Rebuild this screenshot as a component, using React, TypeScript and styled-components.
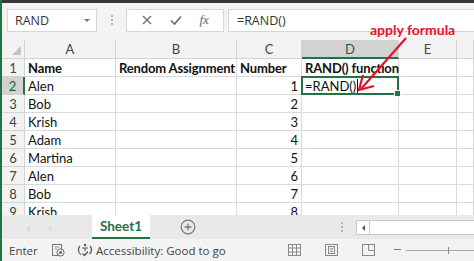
import React, { FC } from "react";
import styled, { createGlobalStyle } from "styled-components";

const GlobalStyle = createGlobalStyle`
    html, body {
        margin: 0;
        padding: 0;
        width: 474px;
        height: 261px;
        overflow: hidden;
        background: #ffffff;
    }
    * {
        box-sizing: border-box;
    }
`;

const GREEN = "#217346";
const COLS = "23px 91px 121px 65px 97px 58px 1fr";

const Window = styled.div`
    position: relative;
    width: 474px;
    height: 261px;
    display: flex;
    flex-direction: column;
    border-left: 2px solid ${GREEN};
    background: #f3f3f3;
    font-family: Lato, "Open Sans", sans-serif;
    overflow: hidden;
`;

const TitleEdge = styled.div`
    height: 3px;
    background: #383838;
`;

const FormulaBar = styled.div`
    height: 37px;
    display: flex;
    align-items: center;
    padding: 0 0 3px 5px;
    background: #f3f3f3;
`;

const NameBox = styled.div`
    width: 90px;
    height: 23px;
    background: #fff;
    border: 1px solid #d6d6d6;
    display: flex;
    align-items: center;
    justify-content: space-between;
    padding: 0 6px 0 7px;
    font-family: "Open Sans", sans-serif;
    font-size: 12.5px;
    color: #333;
`;

const Caret = styled.span`
    width: 0;
    height: 0;
    border-left: 3px solid transparent;
    border-right: 3px solid transparent;
    border-top: 3px solid #777;
`;

const Grip = styled.div`
    width: 29px;
    display: flex;
    flex-direction: column;
    align-items: center;
    gap: 2px;
`;

const Dot = styled.span`
    width: 2px;
    height: 2px;
    background: #b4b4b4;
`;

const ButtonBox = styled.div`
    width: 98px;
    height: 23px;
    background: #fff;
    border: 1px solid #d6d6d6;
    display: flex;
    align-items: center;
    justify-content: space-around;
    padding: 0 6px;
`;

const Fx = styled.span`
    font-family: "Liberation Serif", serif;
    font-style: italic;
    font-size: 13px;
    color: #666;
`;

const FormulaInput = styled.div`
    flex: 1;
    height: 23px;
    margin-left: 4px;
    background: #fff;
    border: 1px solid #d6d6d6;
    border-right: none;
    display: flex;
    align-items: center;
    padding-left: 8px;
    font-family: "Open Sans", sans-serif;
    font-size: 12.5px;
    color: #333;
`;

const Sheet = styled.div`
    height: 175px;
    overflow: hidden;
    background: #fff;
`;

const Row = styled.div<{ $header?: boolean }>`
    display: grid;
    grid-template-columns: ${COLS};
    height: ${(p) => (p.$header ? "19px" : "18px")};
`;

const ColHead = styled.div<{ $active?: boolean }>`
    display: flex;
    align-items: center;
    justify-content: center;
    background: ${(p) => (p.$active ? "#d2d2d2" : "#f3f3f3")};
    border-right: 1px solid #d4d4d4;
    border-bottom: ${(p) => (p.$active ? `2px solid ${GREEN}` : "1px solid #d4d4d4")};
    color: ${(p) => (p.$active ? "#1f5d3b" : "#444")};
    font-size: 13px;
`;

const Corner = styled.div`
    position: relative;
    background: #f3f3f3;
    border-right: 1px solid #d4d4d4;
    border-bottom: 1px solid #d4d4d4;
    &::after {
        content: "";
        position: absolute;
        right: 3px;
        bottom: 3px;
        width: 0;
        height: 0;
        border-left: 9px solid transparent;
        border-bottom: 9px solid #c3c3c3;
    }
`;

const RowHead = styled.div<{ $active?: boolean }>`
    display: flex;
    align-items: center;
    justify-content: center;
    background: ${(p) => (p.$active ? "#d2d2d2" : "#f3f3f3")};
    border-right: ${(p) => (p.$active ? `2px solid ${GREEN}` : "1px solid #d4d4d4")};
    border-bottom: 1px solid #d4d4d4;
    color: ${(p) => (p.$active ? "#1f5d3b" : "#444")};
    font-size: 13px;
`;

const Cell = styled.div<{ $bold?: boolean; $right?: boolean }>`
    position: relative;
    display: flex;
    align-items: center;
    justify-content: ${(p) => (p.$right ? "flex-end" : "flex-start")};
    padding: 0 3px;
    border-right: 1px solid #dadada;
    border-bottom: 1px solid #dadada;
    font-size: 13px;
    font-weight: ${(p) => (p.$bold ? 700 : 400)};
    letter-spacing: ${(p) => (p.$bold ? "-0.15px" : "0")};
    color: #111;
    white-space: nowrap;
`;

const Selected = styled.div`
    position: absolute;
    left: -1px;
    top: -1px;
    right: -1px;
    bottom: -1px;
    border: 2px solid ${GREEN};
    z-index: 2;
    &::after {
        content: "";
        position: absolute;
        right: -4px;
        bottom: -4px;
        width: 5px;
        height: 5px;
        background: ${GREEN};
        border: 1px solid #fff;
    }
`;

const Caret2 = styled.span`
    display: inline-block;
    width: 1px;
    height: 14px;
    margin-left: 1px;
    background: #111;
`;

const TabBar = styled.div`
    height: 24px;
    display: flex;
    align-items: stretch;
    background: #e9e9e9;
`;

const NavArrows = styled.div`
    width: 90px;
    display: flex;
    align-items: center;
    padding-left: 25px;
    gap: 18px;
    color: #c4c4c4;
    font-size: 12px;
`;

const Tab = styled.div`
    width: 58px;
    background: #fff;
    border-bottom: 2px solid ${GREEN};
    display: flex;
    align-items: center;
    justify-content: center;
    color: ${GREEN};
    font-weight: 700;
    font-size: 13.5px;
`;

const AddSheet = styled.div`
    width: 76px;
    display: flex;
    align-items: center;
    justify-content: center;
`;

const TabSpacer = styled.div`
    flex: 1;
    display: flex;
    align-items: center;
    justify-content: flex-end;
    padding-right: 13px;
`;

const VDots = styled.div`
    display: flex;
    flex-direction: column;
    gap: 2px;
`;

const Scroll = styled.div`
    width: 118px;
    margin: 5px 0 4px;
    display: flex;
    background: #fff;
    border: 1px solid #c8c8c8;
    border-right: none;
`;

const ScrollBtn = styled.div`
    width: 13px;
    border-right: 1px solid #c8c8c8;
    display: flex;
    align-items: center;
    justify-content: center;
    &::before {
        content: "";
        border-top: 3px solid transparent;
        border-bottom: 3px solid transparent;
        border-right: 3px solid #555;
    }
`;

const StatusBar = styled.div`
    height: 22px;
    display: flex;
    align-items: center;
    background: #f3f3f3;
    padding-left: 7px;
    font-family: "Open Sans", sans-serif;
    font-size: 11.5px;
    color: #444;
`;

const StatusItem = styled.div<{ $w?: number }>`
    width: ${(p) => (p.$w ? `${p.$w}px` : "auto")};
    display: flex;
    align-items: center;
    gap: 3px;
`;

const ViewIcons = styled.div`
    margin-left: auto;
    display: flex;
    align-items: center;
    gap: 24px;
`;

const Zoom = styled.div`
    position: relative;
    width: 80px;
    height: 14px;
    margin-left: 19px;
    &::before {
        content: "";
        position: absolute;
        left: 0;
        top: 6px;
        width: 7px;
        height: 1px;
        background: #777;
    }
    &::after {
        content: "";
        position: absolute;
        left: 12px;
        right: 0;
        top: 7px;
        height: 1px;
        background: #aaa;
    }
`;

const ZoomTick = styled.span`
    position: absolute;
    left: 54px;
    top: 4px;
    width: 1px;
    height: 7px;
    background: #888;
    z-index: 1;
`;

const Annotation = styled.div`
    position: absolute;
    left: 368px;
    top: 21px;
    color: #e8112d;
    font-weight: 700;
    font-size: 14px;
    white-space: nowrap;
    z-index: 5;
`;

const ArrowSvg = styled.svg`
    position: absolute;
    left: 0;
    top: 0;
    pointer-events: none;
    z-index: 5;
`;

const people = ["Alen", "Bob", "Krish", "Adam", "Martina", "Alen", "Bob", "Krish"];

const App: FC = () => {
    return (
        <>
            <GlobalStyle />
            <Window>
                <TitleEdge />
                <FormulaBar>
                    <NameBox>
                        RAND
                        <Caret />
                    </NameBox>
                    <Grip>
                        <Dot />
                        <Dot />
                        <Dot />
                    </Grip>
                    <ButtonBox>
                        <svg width="12" height="12" viewBox="0 0 12 12">
                            <path d="M2 2 L10 10 M10 2 L2 10" stroke="#6a6a6a" strokeWidth="1.3" />
                        </svg>
                        <svg width="14" height="12" viewBox="0 0 14 12">
                            <path d="M2 6.5 L5.5 10 L12 2.5" stroke="#6a6a6a" strokeWidth="1.6" fill="none" />
                        </svg>
                        <Fx>fx</Fx>
                    </ButtonBox>
                    <FormulaInput>=RAND()</FormulaInput>
                </FormulaBar>
                <Sheet>
                    <Row $header>
                        <Corner />
                        <ColHead>A</ColHead>
                        <ColHead>B</ColHead>
                        <ColHead>C</ColHead>
                        <ColHead $active>D</ColHead>
                        <ColHead>E</ColHead>
                        <ColHead />
                    </Row>
                    <Row>
                        <RowHead>1</RowHead>
                        <Cell $bold>Name</Cell>
                        <Cell $bold>Rendom Assignment</Cell>
                        <Cell $bold>Number</Cell>
                        <Cell $bold>RAND() function</Cell>
                        <Cell />
                        <Cell />
                    </Row>
                    {people.map((name, i) => (
                        <Row key={i}>
                            <RowHead $active={i === 0}>{i + 2}</RowHead>
                            <Cell>{name}</Cell>
                            <Cell />
                            <Cell $right>{i + 1}</Cell>
                            <Cell>
                                {i === 0 && (
                                    <>
                                        =RAND()
                                        <Caret2 />
                                        <Selected />
                                    </>
                                )}
                            </Cell>
                            <Cell />
                            <Cell />
                        </Row>
                    ))}
                </Sheet>
                <TabBar>
                    <NavArrows>
                        <span>‹</span>
                        <span>›</span>
                    </NavArrows>
                    <Tab>Sheet1</Tab>
                    <AddSheet>
                        <svg width="16" height="16" viewBox="0 0 16 16">
                            <circle cx="8" cy="8" r="6.8" stroke="#7a7a7a" strokeWidth="1.2" fill="none" />
                            <path d="M8 4.5 V11.5 M4.5 8 H11.5" stroke="#7a7a7a" strokeWidth="1.3" />
                        </svg>
                    </AddSheet>
                    <TabSpacer>
                        <VDots>
                            <Dot />
                            <Dot />
                            <Dot />
                        </VDots>
                    </TabSpacer>
                    <Scroll>
                        <ScrollBtn />
                    </Scroll>
                </TabBar>
                <StatusBar>
                    <StatusItem $w={43}>Enter</StatusItem>
                    <StatusItem $w={25}>
                        <svg width="13" height="13" viewBox="0 0 13 13">
                            <rect x="0.5" y="0.5" width="9" height="11" fill="none" stroke="#777" />
                            <path d="M2.5 3 H7.5 M2.5 5 H5" stroke="#999" />
                            <circle cx="8.5" cy="8.5" r="3.6" fill="#f3f3f3" stroke="#666" />
                            <circle cx="8.5" cy="8.5" r="1.5" fill="#666" />
                        </svg>
                    </StatusItem>
                    <StatusItem>
                        <svg width="16" height="14" viewBox="0 0 16 14">
                            <path d="M3 3 A5.5 5.5 0 0 0 4 11.5" stroke="#555" strokeWidth="1.2" fill="none" />
                            <path d="M13 3 A5.5 5.5 0 0 1 12.5 11" stroke="#555" strokeWidth="1.2" fill="none" />
                            <circle cx="8" cy="2" r="1.2" fill="#555" />
                            <path d="M5 5 H11 M8 5 V8" stroke="#555" strokeWidth="1.2" />
                            <path d="M5.5 10.5 L7.5 12.5 L11 8.5" stroke="#555" strokeWidth="1.2" fill="none" />
                        </svg>
                        Accessibility: Good to go
                    </StatusItem>
                    <ViewIcons>
                        <svg width="13" height="12" viewBox="0 0 13 12">
                            <rect x="0.5" y="0.5" width="12" height="11" fill="none" stroke="#8a8a8a" />
                            <path d="M4.5 0.5 V11.5 M8.5 0.5 V11.5 M0.5 4 H12.5 M0.5 8 H12.5" stroke="#8a8a8a" />
                        </svg>
                        <svg width="13" height="12" viewBox="0 0 13 12">
                            <rect x="0.5" y="0.5" width="12" height="11" fill="none" stroke="#8a8a8a" />
                            <rect x="3.5" y="2.5" width="6" height="7" fill="none" stroke="#8a8a8a" />
                            <path d="M5 4.5 H8 M5 6 H8 M5 7.5 H8" stroke="#aaa" />
                        </svg>
                        <svg width="13" height="12" viewBox="0 0 13 12">
                            <rect x="0.5" y="0.5" width="12" height="11" fill="none" stroke="#8a8a8a" />
                            <path d="M6.5 0.5 V6.5 H12.5" stroke="#8a8a8a" fill="none" />
                        </svg>
                    </ViewIcons>
                    <Zoom>
                        <ZoomTick />
                    </Zoom>
                </StatusBar>
                <Annotation>apply formula</Annotation>
                <ArrowSvg width="474" height="261" viewBox="0 0 474 261">
                    <path d="M404 38 L359 89" stroke="#e8112d" strokeWidth="2.2" fill="none" />
                    <path d="M361 75 L357 90 L372 86" stroke="#e8112d" strokeWidth="2.2" fill="none" />
                </ArrowSvg>
            </Window>
        </>
    );
};

export default App;
